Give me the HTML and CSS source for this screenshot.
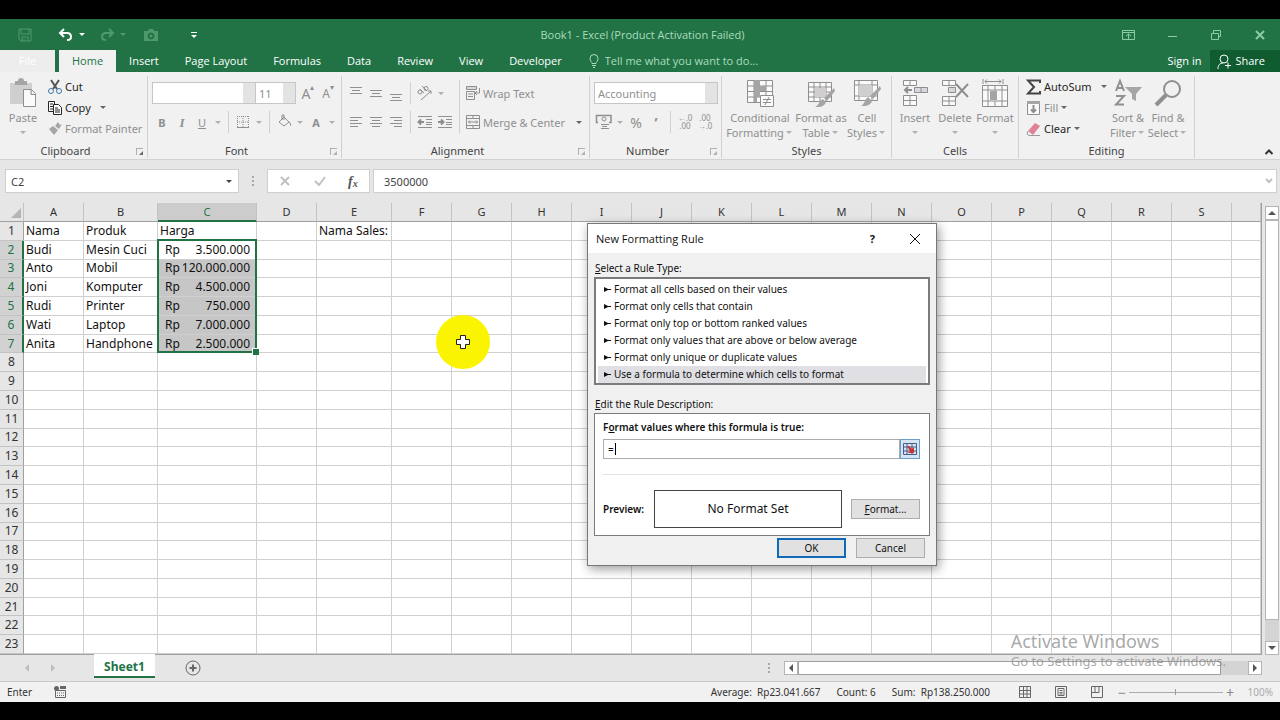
FILE: index.html
```html
<!DOCTYPE html>
<html lang="en">
<head>
    <meta charset="UTF-8">
    <meta name="viewport" content="width=device-width, initial-scale=1.0">
    <title>Book1 - Excel</title>
    <link rel="stylesheet" href="styles.css">
</head>
<body>
    <header class="titlebar">
        <div class="quick-access">
            <button class="qat dim" aria-label="Save"><svg width="14" height="14" viewBox="0 0 14 14"><path d="M1 1h12v12H3l-2-2zM3 1v5h8V1M4 13V9h6v4M6 11v2"/></svg></button>
            <button class="qat undo" aria-label="Undo"><svg width="16" height="14" viewBox="0 0 16 14"><path class="thick" d="M6 1L2 5l4 4M2 5h7c3 0 4 2 4 4s-1 3-4 3"/></svg></button>
            <span class="caret light"></span>
            <button class="qat dim redo" aria-label="Redo"><svg width="16" height="14" viewBox="0 0 16 14"><path class="thick" d="M10 1l4 4-4 4M14 5H7C4 5 3 7 3 9s1 3 4 3"/></svg></button>
            <span class="caret dimmed"></span>
            <button class="qat dim camera" aria-label="Camera"><svg width="16" height="14" viewBox="0 0 16 14"><path class="solid" fill-rule="evenodd" d="M1 3h4l1-2h4l1 2h4v10H1zM8 4.500a3.500 3.500 0 1 0 .01 0zM8 6.500a1.500 1.500 0 1 1-.01 0z"/></svg></button>
            <button class="qat customize" aria-label="Customize toolbar"><svg width="8" height="8" viewBox="0 0 8 8"><path d="M1 1.500h6"/><path class="solid" d="M1 4h6L4 7z"/></svg></button>
        </div>
        <div class="title">Book1 - Excel (Product Activation Failed)</div>
        <div class="window-buttons">
            <button aria-label="Ribbon options"><svg width="13" height="12" viewBox="0 0 13 12"><path d="M.5 1.500h12v9H.5zM.5 3.500h12M6.500 10V5M4 7l2.500-2L9 7"/></svg></button>
            <button aria-label="Minimize"><svg width="12" height="12" viewBox="0 0 12 12"><path d="M2 7.500h9"/></svg></button>
            <button aria-label="Restore"><svg width="12" height="12" viewBox="0 0 12 12"><path d="M1.500 4.500h7v6h-7zM3.500 4V1.500h7v6H9"/></svg></button>
            <button aria-label="Close"><svg width="12" height="12" viewBox="0 0 12 12"><path class="thick" d="M2 2l8 8M10 2l-8 8"/></svg></button>
        </div>
    </header>

    <nav class="tabs">
        <a href="#" class="tab file">File</a>
        <a href="#" class="tab active">Home</a>
        <a href="#" class="tab">Insert</a>
        <a href="#" class="tab">Page Layout</a>
        <a href="#" class="tab">Formulas</a>
        <a href="#" class="tab">Data</a>
        <a href="#" class="tab">Review</a>
        <a href="#" class="tab">View</a>
        <a href="#" class="tab">Developer</a>
        <label class="tell-me">
            <svg width="10" height="14" viewBox="0 0 10 14"><path d="M3 9.500C3 8 1 7 1 4.500a4 4 0 0 1 8 0C9 7 7 8 7 9.500zM3 11.500h4M4 13.500h2"/></svg>
            <input type="text" placeholder="Tell me what you want to do..." aria-label="Tell me what you want to do">
        </label>
        <a href="#" class="sign-in">Sign in</a>
        <a href="#" class="share"><svg width="15" height="15" viewBox="0 0 15 15"><circle cx="7" cy="5" r="4"/><path d="M1 15c0-4 2-6 5-6M8 11.500h6M11 8.500v6"/></svg>Share</a>
    </nav>

    <section class="ribbon">
        <div class="group clipboard">
            <div class="group-body">
                <button class="big paste off">
                    <svg width="28" height="30" viewBox="0 0 28 30"><path class="mid" d="M1 5h22v21H1z"/><path class="dark" d="M6 3h3a3 3 0 0 1 6 0h3v4H6z"/><path class="paper" d="M14.500 11.500h8l4 4v13h-12zM22 11.500v5h4.500"/></svg>
                    <span>Paste</span><span class="caret"></span>
                </button>
                <div class="stack">
                    <button class="small"><svg width="16" height="16" viewBox="0 0 16 16"><path d="M4 1l6 9M12 1L6 10" stroke="#555" stroke-width="2"/><g class="blue"><circle cx="4" cy="12" r="2.500"/><circle cx="12" cy="12" r="2.500"/></g></svg>Cut</button>
                    <button class="small"><svg width="16" height="16" viewBox="0 0 16 16" stroke="#5a6470"><path class="paper" d="M1.500 1.500h6v10h-6zM3 4h3M3 6.500h3M3 9h3"/><path class="paper" d="M6.500 4.500h5l3 3v7h-8zM8 8h3M8 10h5M8 12h5"/></svg>Copy<span class="caret"></span></button>
                    <button class="small off"><svg width="16" height="16" viewBox="0 0 16 16"><path class="dark" d="M2 8l4-3 5 4-4 5zM8 5l3-4 2 3 2-1-3 5z"/></svg>Format Painter</button>
                </div>
            </div>
            <div class="group-label">Clipboard<i class="launcher on"></i></div>
        </div>

        <div class="group font">
            <div class="group-body rows">
                <div class="row">
                    <select class="combo name" aria-label="Font" disabled><option></option></select>
                    <select class="combo size" aria-label="Font size" disabled><option>11</option></select>
                    <button class="tool grow">A<sup>▴</sup></button>
                    <button class="tool grow less">A<sup>▾</sup></button>
                </div>
                <div class="row">
                    <button class="tool"><b>B</b></button>
                    <button class="tool italic">I</button>
                    <button class="tool"><u>U</u></button><span class="caret"></span>
                    <i class="sep"></i>
                    <button class="tool" aria-label="Borders"><svg width="14" height="14" viewBox="0 0 14 14"><path stroke-dasharray="1 1" d="M1 1.500h12M1.500 1v12M12.500 1v12M7 1v12M1 7h12"/><path d="M1 12.500h12"/></svg></button><span class="caret"></span>
                    <i class="sep"></i>
                    <button class="tool" aria-label="Fill color"><svg width="16" height="16" viewBox="0 0 16 16"><path d="M3 8l5-5 5 5-5 4zM6 6V1h2v5M13 8c2 1 2 4 1 4"/></svg></button><span class="caret"></span>
                    <button class="tool"><b>A</b></button><span class="caret"></span>
                </div>
            </div>
            <div class="group-label">Font<i class="launcher"></i></div>
        </div>

        <div class="group alignment">
            <div class="group-body">
                <div class="rows">
                    <div class="row">
                        <button class="tool" aria-label="Top align"><svg width="14" height="18" viewBox="0 0 14 18"><path d="M1 3.500h12M3 6.500h8M1 9.500h12"/></svg></button>
                        <button class="tool" aria-label="Middle align"><svg width="14" height="18" viewBox="0 0 14 18"><path d="M1 6.500h12M3 9.500h8M1 12.500h12"/></svg></button>
                        <button class="tool" aria-label="Bottom align"><svg width="14" height="18" viewBox="0 0 14 18"><path d="M1 10.500h12M3 13.500h8M1 16.500h12"/></svg></button>
                        <i class="sep"></i>
                        <button class="tool" aria-label="Orientation"><svg width="18" height="16" viewBox="0 0 18 16"><path d="M5 15L15 6M12 6h3v3"/><circle cx="4" cy="7" r="2"/><path d="M4 4l4 4M6 1l5 5"/><circle cx="10" cy="3.500" r="2"/></svg></button><span class="caret"></span>
                    </div>
                    <div class="row">
                        <button class="tool" aria-label="Align left"><svg width="14" height="14" viewBox="0 0 14 14"><path d="M1 2.500h12M1 5.500h8M1 8.500h12M1 11.500h8"/></svg></button>
                        <button class="tool" aria-label="Center"><svg width="14" height="14" viewBox="0 0 14 14"><path d="M1 2.500h12M3 5.500h8M1 8.500h12M3 11.500h8"/></svg></button>
                        <button class="tool" aria-label="Align right"><svg width="14" height="14" viewBox="0 0 14 14"><path d="M1 2.500h12M5 5.500h8M1 8.500h12M5 11.500h8"/></svg></button>
                        <i class="sep"></i>
                        <button class="tool" aria-label="Decrease indent"><svg width="16" height="14" viewBox="0 0 16 14"><path d="M1 1.500h14M9 4.500h6M9 7.500h6M9 9.500h6M1 12.500h14"/><path class="heavy" d="M7 7H2M4 4.500L1.500 7 4 9.500"/></svg></button>
                        <button class="tool" aria-label="Increase indent"><svg width="16" height="14" viewBox="0 0 16 14"><path d="M1 1.500h14M9 4.500h6M9 7.500h6M9 9.500h6M1 12.500h14"/><path class="heavy" d="M1 7h5M4 4.500L6.500 7 4 9.500"/></svg></button>
                    </div>
                </div>
                <i class="sep tall"></i>
                <div class="rows">
                    <div class="row"><button class="small off"><svg width="16" height="16" viewBox="0 0 16 16"><path class="fillgray" d="M1.500 1.500h10v3h-10z"/><path d="M1.500 6.500h8v8h-8zM3 9h5M3 11.500h5M14.500 3v5H10M12 6l-2 2 2 2"/></svg>Wrap Text</button></div>
                    <div class="row"><button class="small off merge"><svg width="16" height="16" viewBox="0 0 16 16"><path d="M1.500 1.500h13v13h-13zM1.500 4.500h13M1.500 11.500h13M8 1.500v3M8 11.500v3M3 8h10M5 6.500L3.500 8 5 9.500M11 6.500L12.500 8 11 9.500"/></svg>Merge &amp; Center<span class="caret"></span></button></div>
                </div>
            </div>
            <div class="group-label">Alignment<i class="launcher"></i></div>
        </div>

        <div class="group number">
            <div class="group-body rows">
                <div class="row"><select class="combo format" aria-label="Number format" disabled><option>Accounting</option></select></div>
                <div class="row">
                    <button class="tool" aria-label="Accounting format"><svg width="18" height="16" viewBox="0 0 18 16"><path d="M3 8.500H1.500v-7H16v7h-2" stroke-width="1.500"/><circle cx="9" cy="5" r="2"/><path d="M6 10.500h8M7 12.500h5M6 14.500h8"/></svg></button><span class="caret"></span>
                    <button class="tool percent">%</button>
                    <button class="tool comma" aria-label="Comma style">’</button>
                    <i class="sep"></i>
                    <button class="tool digits"><span>←.0</span><span>.00</span></button>
                    <button class="tool digits"><span>.00</span><span>→.0</span></button>
                </div>
            </div>
            <div class="group-label">Number<i class="launcher"></i></div>
        </div>

        <div class="group styles">
            <div class="group-body">
                <button class="big off wide">
                    <svg width="28" height="30" viewBox="0 0 28 30"><path class="paper" d="M1.500 2.500h25v22h-25zM1.500 8h25M1.500 13.500h25M1.500 19h25M8 2.500v22M20 2.500v22"/><path class="dark" d="M8 2h6v6h6v5h-6v6h-3v5H8z"/><path class="paper" d="M14.500 17.500h13v11h-13zM17 21.500h8M17 24.500h8M23 19l-4 8"/></svg>
                    <span>Conditional</span><span>Formatting <span class="caret"></span></span>
                </button>
                <button class="big off medium">
                    <svg width="28" height="30" viewBox="0 0 28 30"><path class="paper" d="M1.500 4.500h23v19h-23zM1.500 9h23M1.500 14h23M1.500 19h23M7 4.500v19M13 4.500v19M19 4.500v19"/><path class="mid" d="M8 10h11v9H8z"/><path class="dark" d="M27 10l1 3-8 10-3-3zM16 21l3 3c-2 5-6 5-11 5 4-2 4-6 8-8z"/></svg>
                    <span>Format as</span><span>Table <span class="caret"></span></span>
                </button>
                <button class="big off">
                    <svg width="28" height="30" viewBox="0 0 28 30"><path class="paper" d="M1.500 2.500h23v20h-23zM1.500 7h23M1.500 18h23M6 2.500v20M19 2.500v20"/><path class="mid" d="M6 7h13v11H6z"/><path class="dark" d="M27 8l1 3-8 10-3-3zM15 19l4 4c-2 5-6 5-11 5 4-2 3-6 7-9z"/></svg>
                    <span>Cell</span><span>Styles <span class="caret"></span></span>
                </button>
            </div>
            <div class="group-label">Styles</div>
        </div>

        <div class="group cells">
            <div class="group-body">
                <button class="big off">
                    <svg width="28" height="30" viewBox="0 0 28 30"><path class="paper" d="M2.500 2.500h13v5h-13zM9 2.500v5M2.500 17.500h13v10h-13zM9 17.500v10M2.500 22.500h13"/><path class="fillgray" d="M13.500 9.500h13v5h-13zM20 9.500v5"/><path class="heavy" d="M11 12H4M7 9l-3 3 3 3"/></svg>
                    <span>Insert</span><span class="caret"></span>
                </button>
                <button class="big off">
                    <svg width="28" height="30" viewBox="0 0 28 30"><path class="paper" d="M1.500 2.500h13v5h-13zM8 2.500v5M1.500 18.500h13v9h-13zM8 18.500v9M1.500 23h13"/><path class="fillgray" d="M7.500 9.500h7v5h-7z"/><path class="heavy" d="M15 6l12 13M27 6L15 19"/></svg>
                    <span>Delete</span><span class="caret"></span>
                </button>
                <button class="big off">
                    <svg width="28" height="30" viewBox="0 0 28 30"><path class="paper" d="M1.500 7.500h25v21h-25zM1.500 12h25M1.500 23h25M7 7.500v21M14 7.500v5M14 23v5M21 7.500v21"/><path class="dark" d="M9 13h7v9H9z"/><path d="M2 1v5M22 1v5M4 3.500h16M6 1.500l-2 2 2 2M18 1.500l2 2-2 2"/></svg>
                    <span>Format</span><span class="caret"></span>
                </button>
            </div>
            <div class="group-label">Cells</div>
        </div>

        <div class="group editing">
            <div class="group-body">
                <div class="stack">
                    <button class="small"><svg width="16" height="16" viewBox="0 0 16 16"><path d="M14 4V1.500H2L8 8l-6 6.500h12V12" stroke="#444" stroke-width="2"/></svg>AutoSum<span class="caret"></span></button>
                    <button class="small off"><svg width="16" height="16" viewBox="0 0 16 16"><path class="paper" d="M1.500 1.500h12v13h-12z"/><path class="dark" d="M1 1h13v3H1z"/><path class="heavy" d="M7.500 5v7M5 9.500L7.500 12 10 9.500"/></svg>Fill<span class="caret near"></span></button>
                    <button class="small"><svg width="16" height="16" viewBox="0 0 16 16"><path class="pink" d="M2 10L9 2l5 3-7 9z"/><path class="gray" d="M2 10l-1 3 2 1.500h11"/></svg>Clear<span class="caret near"></span></button>
                </div>
                <button class="big off">
                    <svg class="sort" width="28" height="30" viewBox="0 0 28 30"><path class="thick" d="M2 13L6 3l4 10M3.500 10h5M2 18h8L2 26.500h8"/><path class="dark" d="M11 9h17l-6 7v7l-4-2v-5z"/></svg>
                    <span>Sort &amp;</span><span>Filter <span class="caret"></span></span>
                </button>
                <button class="big off">
                    <svg width="28" height="30" viewBox="0 0 28 30"><circle class="thick" cx="18" cy="11" r="8"/><path d="M12 17L2 27" stroke-width="4"/></svg>
                    <span>Find &amp;</span><span>Select <span class="caret"></span></span>
                </button>
            </div>
            <div class="group-label">Editing</div>
        </div>
        <button class="collapse" aria-label="Collapse the ribbon"><svg width="10" height="8" viewBox="0 0 10 8"><path d="M1.500 6L5 2.500 8.500 6" stroke-width="2"/></svg></button>
    </section>

    <section class="formula-bar">
        <div class="name-box"><input type="text" value="C2" aria-label="Name box"><span class="caret"></span></div>
        <i class="dots"></i>
        <div class="formula-buttons">
            <button aria-label="Cancel entry"><svg width="12" height="12" viewBox="0 0 12 12"><path d="M2 2l8 8M10 2l-8 8" stroke-width="2"/></svg></button>
            <button aria-label="Enter entry"><svg width="12" height="12" viewBox="0 0 12 12"><path d="M1 6l4 4 6-8" stroke-width="2"/></svg></button>
            <button class="fx">f<small>x</small></button>
        </div>
        <div class="formula-input">
            <input type="text" value="3500000" aria-label="Formula">
            <svg width="8" height="8" viewBox="0 0 8 8"><path d="M1 2l3 3 3-3" stroke-width="2"/></svg>
        </div>
    </section>

    <main class="workspace">
        <div class="sheet"><table class="grid" id="grid"></table></div>
        <div class="v-scroll">
            <button class="arrow up" aria-label="Scroll up"></button>
            <div class="track"><div class="thumb"></div></div>
            <button class="arrow down" aria-label="Scroll down"></button>
        </div>
    </main>

    <section class="sheet-bar">
        <button class="arrow left faded" aria-label="Previous sheet"></button>
        <button class="arrow right faded" aria-label="Next sheet"></button>
        <a href="#" class="sheet-tab">Sheet1</a>
        <button class="add-sheet" aria-label="New sheet"><svg width="16" height="16" viewBox="0 0 16 16"><circle cx="8" cy="8" r="7"/><path d="M4.500 8h7M8 4.500v7" stroke-width="2"/></svg></button>
        <i class="dots"></i>
        <div class="h-scroll">
            <button class="arrow left" aria-label="Scroll left"></button>
            <div class="track"><div class="thumb"></div></div>
            <button class="arrow right" aria-label="Scroll right"></button>
        </div>
    </section>

    <footer class="status">
        <span>Enter</span>
        <svg class="macro" width="14" height="14" viewBox="0 0 14 14"><path d="M2.500 5.500h10v7h-10zM4 8h1M6 8h1M8 8h1M10 8h1M4 10.500h1M6 10.500h1M8 10.500h1M10 10.500h1"/><path class="solid" d="M7 1h6v3H7zM3.500 1a2.500 2.500 0 1 0 .01 0z"/></svg>
        <div class="totals"><span>Average:&nbsp; Rp23.041.667</span><span>Count: 6</span><span>Sum:&nbsp; Rp138.250.000</span></div>
        <div class="views">
            <button aria-label="Normal"><svg width="14" height="14" viewBox="0 0 14 14"><path d="M1.500 1.500h11v11h-11zM1.500 5.500h11M1.500 9h11M5.500 1.500v11M9 1.500v11"/></svg></button>
            <button aria-label="Page layout"><svg width="14" height="14" viewBox="0 0 14 14"><path d="M1.500 1.500h11v11h-11zM4 3.500h6v7H4zM5.500 5.500h3M5.500 7.500h3M5.500 9h3"/></svg></button>
            <button aria-label="Page break preview"><svg width="14" height="14" viewBox="0 0 14 14"><path d="M1.500 1.500h11v11h-11zM5 1.500v6h4v-6M1.500 7.500H5"/></svg></button>
        </div>
        <div class="zoom">
            <span>−</span><input type="range" min="0" max="100" value="50" aria-label="Zoom"><span>+</span>
            <span class="level">100%</span>
        </div>
    </footer>

    <div class="pointer"><svg width="16" height="16" viewBox="0 0 16 16"><path d="M5.500 1.500h5v4h4v5h-4v4h-5v-4h-4v-5h4z"/></svg></div>

    <form class="dialog" role="dialog" aria-labelledby="dialog-title">
        <div class="dialog-title">
            <span id="dialog-title">New Formatting Rule</span>
            <button type="button" class="help" aria-label="Help">?</button>
            <button type="button" aria-label="Close"><svg width="12" height="12" viewBox="0 0 12 12"><path d="M1 1l10 10M11 1L1 11"/></svg></button>
        </div>
        <div class="dialog-body">
            <div class="caption" id="rule-type"><u>S</u>elect a Rule Type:</div>
            <ul class="rule-list" role="listbox" aria-labelledby="rule-type" id="rules"></ul>
            <div class="caption"><u>E</u>dit the Rule Description:</div>
            <div class="panel">
                <label for="formula">F<u>o</u>rmat values where this formula is true:</label>
                <div class="formula-row">
                    <input type="text" id="formula" value="=">
                    <button type="button" aria-label="Select range"><svg width="14" height="12" viewBox="0 0 14 12"><path d="M.5.500h13v11H.5zM0 4h14M0 8h14M4 0v12M9 0v12"/><path class="red" d="M4 3l2 0 3 3 2-2v6H5l2-2z"/></svg></button>
                </div>
                <div class="preview-row">
                    <b>Preview:</b>
                    <output>No Format Set</output>
                    <button type="button" class="push"><u>F</u>ormat...</button>
                </div>
            </div>
            <div class="actions">
                <button type="button" class="push default">OK</button>
                <button type="button" class="push">Cancel</button>
            </div>
        </div>
    </form>

    <div class="watermark"><p>Activate Windows</p><p class="hint">Go to Settings to activate Windows.</p></div>
    <script src="script.js"></script>
</body>
</html>
```
FILE: styles.css
```css
:root {
    --green: #217346;
    --dark-green: #0e5c2f;
    --ribbon: #f1f1f1;
    --chrome: #e6e6e6;
    --line: #d0d0d0;
    --off: #8f8f8f;
    --text: #333333;
}
* {
    box-sizing: border-box;
}
body {
    margin: 0;
    padding: 19px 0 18px;
    height: 100vh;
    display: flex;
    flex-direction: column;
    overflow: hidden;
    position: relative;
    background-color: #000000;
    color: var(--text);
    font-family: "Noto Sans", "Open Sans", sans-serif;
    font-size: 11px;
    line-height: 15px;
}
button, input, select {
    font: inherit;
    color: inherit;
    margin: 0;
    padding: 0;
    border: none;
    background: none;
}
button {
    display: inline-flex;
    align-items: center;
    justify-content: center;
}
input {
    outline: none;
    min-width: 0;
}
a {
    color: inherit;
    text-decoration: none;
}
svg {
    display: block;
    flex: none;
    fill: none;
    stroke: currentColor;
    stroke-width: 1;
}
svg .thick {
    stroke-width: 2;
}
svg .heavy {
    stroke-width: 2;
}
svg .solid {
    fill: currentColor;
    stroke: none;
}
svg .mid {
    fill: #d0cece;
    stroke: none;
}
svg .dark {
    fill: #a5a5a5;
    stroke: none;
}
svg .paper {
    fill: #fafafa;
}
svg .fillgray {
    fill: #d8d8dc;
}
svg .blue {
    stroke: #3f78a8;
}
svg .pink {
    fill: #e08198;
    stroke: none;
}
svg .gray {
    stroke: #999999;
}
svg .red {
    fill: #d03030;
    stroke: none;
}
.caret {
    display: inline-flex;
    justify-content: center;
    width: 12px;
    flex: none;
}
.caret::before {
    content: "";
    border: 3px solid transparent;
    border-top-color: currentColor;
    border-bottom: none;
}
.off .caret, .row .caret {
    color: #b0b0b0;
}
.small .caret {
    color: #666666;
}

/* Title bar */
.titlebar {
    display: flex;
    align-items: center;
    height: 31px;
    flex: none;
    background-color: var(--green);
    color: #a9dcbc;
}
.titlebar, .tabs {
    font-family: "Open Sans", "Noto Sans", sans-serif;
}
.quick-access, .window-buttons {
    flex: 1;
    display: flex;
    align-items: center;
}
.quick-access {
    padding-left: 15px;
    color: #ffffff;
}
.qat {
    width: 20px;
}
.qat.dim, .caret.dimmed {
    color: #4f9a6d;
}
.undo {
    margin-left: 21px;
}
.redo {
    margin-left: 9px;
}
.camera {
    margin-left: 12px;
}
.customize {
    margin-left: 23px;
}
.window-buttons {
    justify-content: flex-end;
    gap: 24px;
    padding-right: 10px;
    color: #8ecba5;
}
.window-buttons button {
    width: 20px;
}

/* Ribbon tabs */
.tabs {
    display: flex;
    height: 22px;
    flex: none;
    background-color: var(--green);
    color: #ffffff;
    line-height: 22px;
}
.tab {
    padding: 0 13px;
}
.tab.file {
    width: 55px;
    margin-right: 4px;
    text-align: center;
    background-color: #ededed;
}
.tab.active {
    background-color: var(--ribbon);
    color: var(--green);
}
.tell-me {
    flex: 1;
    display: flex;
    align-items: center;
    gap: 6px;
    padding-left: 14px;
    color: #a9dcbc;
}
.tell-me input {
    flex: 1;
}
.tell-me input::placeholder {
    color: #a9dcbc;
}
.sign-in {
    padding-right: 9px;
}
.share {
    display: flex;
    align-items: center;
    gap: 3px;
    padding: 0 15px 0 7px;
    background-color: var(--dark-green);
}

/* Ribbon */
.ribbon {
    display: flex;
    height: 88px;
    flex: none;
    background-color: var(--ribbon);
    border-bottom: 1px solid #d2d2d2;
    position: relative;
}
.group {
    display: flex;
    flex-direction: column;
    margin: 4px 0 1px;
    border-right: 1px solid var(--line);
}
.clipboard {
    width: 148px;
}
.font {
    width: 194px;
}
.alignment {
    width: 248px;
}
.number {
    width: 132px;
}
.styles {
    width: 170px;
}
.cells {
    width: 127px;
}
.editing {
    width: 176px;
}
.group-body {
    height: 67px;
    flex: none;
    display: flex;
    padding: 0 3px;
}
.group-label {
    position: relative;
    padding-right: 16px;
    text-align: center;
    color: #444444;
}
.styles .group-label, .cells .group-label, .editing .group-label {
    padding-right: 0;
}
.launcher {
    position: absolute;
    right: 4px;
    top: 5px;
    width: 7px;
    height: 7px;
    border-top: 1px solid #b0b0b0;
    border-left: 1px solid #b0b0b0;
}
.launcher::after {
    content: "";
    position: absolute;
    right: 0;
    bottom: 0;
    border: 2px solid #b0b0b0;
    border-top-color: transparent;
    border-left-color: transparent;
}
.launcher.on, .launcher.on::after {
    border-right-color: #666666;
    border-bottom-color: #666666;
}
.big {
    flex-direction: column;
    justify-content: flex-start;
    width: 40px;
    padding-top: 2px;
    white-space: nowrap;
}
.big svg {
    margin-bottom: 2px;
}
.big span {
    display: inline-flex;
    align-items: center;
}
.big .caret {
    width: 10px;
}
.big > .caret {
    height: 14px;
}
.wide {
    width: 70px;
}
.medium {
    width: 52px;
}
.off {
    color: var(--off);
}
.stack {
    display: flex;
    flex-direction: column;
    padding-left: 4px;
}
.small {
    height: 22px;
    gap: 2px;
    justify-content: flex-start;
    white-space: nowrap;
    color: #262626;
}
.small.off {
    color: var(--off);
}
.small .caret {
    margin-left: 4px;
}
.small .near {
    margin-left: -2px;
}
.stack .small {
    height: 21px;
}
.editing .stack {
    width: 86px;
}
.rows {
    flex-direction: column;
    display: flex;
    padding-top: 6px;
    gap: 7px;
}
.row {
    display: flex;
    align-items: center;
    height: 22px;
    color: var(--off);
}
.font .rows, .number .rows {
    padding-left: 4px;
}
.alignment .rows {
    padding-left: 1px;
}
.tool {
    width: 20px;
    height: 20px;
}
.sep {
    width: 1px;
    height: 22px;
    margin: 0 4px;
    background-color: var(--line);
}
.sep.tall {
    height: 54px;
    margin: 4px 4px 0;
}
.merge .caret {
    margin-left: 6px;
}
.combo {
    appearance: none;
    height: 22px;
    padding-left: 3px;
    border: 1px solid #c6c6c6;
    color: var(--off);
    opacity: 1;
    background: linear-gradient(to left, #e3e3e3 12px, #ffffff 12px);
}
.combo.name {
    width: 104px;
}
.combo.size {
    width: 40px;
    margin-right: 2px;
    border-left: none;
}
.combo.format {
    width: 124px;
}
.grow {
    font-size: 14px;
}
.grow.less {
    font-size: 12px;
}
.grow sup {
    align-self: flex-start;
    font-size: 8px;
    line-height: 8px;
}
.italic {
    font-family: "Liberation Serif", serif;
    font-style: italic;
    font-weight: bold;
    font-size: 13px;
}
.percent, .comma {
    font-size: 14px;
}
.comma {
    font-weight: bold;
}
.digits {
    flex-direction: column;
    font-size: 8px;
    line-height: 8px;
}
.collapse {
    position: absolute;
    right: 6px;
    bottom: 3px;
}

/* Formula bar */
.formula-bar {
    display: flex;
    height: 43px;
    flex: none;
    padding: 9px 3px 10px 5px;
    background-color: var(--chrome);
}
.name-box, .formula-buttons, .formula-input {
    display: flex;
    align-items: center;
    background-color: #ffffff;
    border: 1px solid #cfcfcf;
}
.name-box {
    width: 234px;
    padding: 0 3px 0 5px;
    color: #444444;
}
.name-box input, .formula-input input {
    flex: 1;
}
.dots {
    width: 2px;
    height: 11px;
    margin: auto 13px;
    background: repeating-linear-gradient(#a8a8a8 0 2px, transparent 2px 4px);
}
.formula-buttons {
    width: 103px;
    justify-content: space-around;
    color: #c0c0c0;
}
.formula-buttons .fx {
    color: #555555;
    font-family: "Liberation Serif", serif;
    font-style: italic;
    font-weight: bold;
    font-size: 14px;
}
.fx small {
    font-size: 10px;
    padding-top: 4px;
}
.formula-input {
    flex: 1;
    margin-left: 3px;
    padding: 0 3px 0 10px;
    color: #444444;
}
.formula-input svg {
    color: #c0c0c0;
}

/* Sheet */
.workspace {
    flex: 1;
    display: flex;
    min-height: 0;
    background-color: var(--chrome);
}
.sheet {
    flex: 1;
    border-right: 1px solid #a0a0a0;
    border-bottom: 1px solid #a0a0a0;
}
.grid {
    width: 100%;
    height: 100%;
    table-layout: fixed;
    border-collapse: separate;
    border-spacing: 0;
    font-size: 12px;
    line-height: 16px;
    color: #111111;
    white-space: nowrap;
}
.grid th {
    padding: 0;
    font-weight: normal;
    font-size: 11px;
    color: #333333;
    background-color: var(--chrome);
    border-right: 1px solid #c3c3c3;
    border-bottom: 1px solid #c3c3c3;
}
.grid thead th {
    height: 19px;
    border-bottom-color: #a0a0a0;
}
.grid tbody th {
    font-size: 12px;
    border-right-color: #a0a0a0;
}
.grid thead th.picked {
    background-color: #cccccc;
    color: var(--green);
    border-bottom: 2px solid var(--green);
}
.grid tbody th.picked {
    background-color: #d2d2d2;
    color: var(--green);
    border-right: 2px solid var(--green);
}
.grid td {
    padding: 0 2px;
    background-color: #ffffff;
    border-right: 1px solid #d0d0d0;
    border-bottom: 1px solid #d0d0d0;
    position: relative;
}
.grid td.shaded {
    background-color: #c6c6c6;
}
.corner::after {
    content: "";
    display: block;
    width: 0;
    margin: 2px 2px 0 auto;
    border: 5px solid #b5b5b5;
    border-top-color: transparent;
    border-left-color: transparent;
}
.money {
    display: flex;
    justify-content: space-between;
    padding: 0 4px 0 5px;
}
.selection {
    position: absolute;
    top: -2px;
    left: -1px;
    width: calc(100% + 2px);
    height: calc(600% + 8px);
    border: 2px solid var(--green);
    z-index: 1;
}
.selection::after {
    content: "";
    position: absolute;
    right: -4px;
    bottom: -4px;
    width: 6px;
    height: 6px;
    background-color: var(--green);
    border: 1px solid #ffffff;
    border-right: none;
    border-bottom: none;
}

/* Scrollbars */
.arrow {
    width: 14px;
    height: 14px;
    background-color: #ffffff;
    border: 1px solid #b5b5b5;
    color: #555555;
}
.arrow::before {
    content: "";
    border: 4px solid transparent;
}
.arrow.up::before {
    border-bottom-color: currentColor;
    border-top: none;
}
.arrow.down::before {
    border-top-color: currentColor;
    border-bottom: none;
}
.arrow.left::before {
    border-right-color: currentColor;
    border-left: none;
}
.arrow.right::before {
    border-left-color: currentColor;
    border-right: none;
}
.arrow.faded {
    background: none;
    border: none;
    color: #bdbdbd;
}
.v-scroll {
    display: flex;
    flex-direction: column;
    width: 18px;
    padding: 3px 1px 0 3px;
}
.v-scroll .track, .h-scroll .track {
    flex: 1;
    background-color: #d4d4d4;
}
.v-scroll .thumb {
    height: 95%;
    background-color: #ffffff;
    border: 1px solid #b5b5b5;
}
.h-scroll {
    display: flex;
    width: 478px;
    margin-right: 18px;
}
.h-scroll .thumb {
    width: 94%;
    height: 14px;
    background-color: #ffffff;
    border: 1px solid #a0a0a0;
}

/* Sheet tabs */
.sheet-bar {
    display: flex;
    align-items: center;
    height: 26px;
    flex: none;
    padding-left: 20px;
    background-color: var(--chrome);
}
.sheet-bar .faded {
    margin-right: 12px;
}
.sheet-tab {
    align-self: flex-start;
    width: 61px;
    height: 24px;
    margin: -1px 30px 0 22px;
    background-color: #ffffff;
    border-bottom: 2px solid var(--green);
    color: var(--green);
    font-weight: bold;
    font-size: 12px;
    line-height: 26px;
    text-align: center;
}
.add-sheet {
    color: #666666;
}
.sheet-bar .dots {
    margin: 0 14px 0 auto;
}

/* Status bar */
.status {
    display: flex;
    align-items: center;
    height: 21px;
    flex: none;
    padding: 0 7px;
    background-color: #f1f1f1;
    border-top: 1px solid #c8c8c8;
    font-size: 10px;
}
.macro {
    margin-left: 21px;
}
.macro, .views {
    color: #666666;
}
.totals {
    flex: 1;
    display: flex;
    justify-content: flex-end;
    gap: 16px;
}
.views {
    display: flex;
    gap: 22px;
    padding: 0 14px 0 28px;
}
.zoom {
    display: flex;
    align-items: center;
    color: #888888;
}
.zoom span {
    font-size: 14px;
}
.zoom .level {
    width: 39px;
    text-align: right;
    font-size: 10px;
    color: #aaaaaa;
}
.zoom input {
    appearance: none;
    width: 94px;
    height: 10px;
    margin: 0 3px;
    background: linear-gradient(#aaaaaa, #aaaaaa) center / 100% 1px no-repeat;
}
.zoom input::-webkit-slider-thumb {
    appearance: none;
    width: 1px;
    height: 6px;
    background-color: #999999;
}

/* Mouse highlight */
.pointer {
    position: absolute;
    left: 436px;
    top: 315px;
    display: flex;
    align-items: center;
    justify-content: center;
    width: 54px;
    height: 54px;
    border-radius: 50%;
    background-color: #fbf400;
    color: #222222;
}
.pointer path {
    fill: #ffffff;
}

/* Dialog */
.dialog {
    position: absolute;
    left: 587px;
    top: 223px;
    width: 350px;
    background-color: #f0f0f0;
    border: 1px solid #777777;
    box-shadow: 2px 3px 10px rgba(0,0,0,0.4);
    color: #111111;
    font-size: 10px;
}
.dialog-title {
    display: flex;
    align-items: center;
    height: 29px;
    padding: 0 15px 0 8px;
    background-color: #ffffff;
    font-family: "Open Sans", "Noto Sans", sans-serif;
    font-size: 11px;
}
.dialog-title span {
    flex: 1;
}
.help {
    margin-right: 34px;
    font-weight: bold;
}
.dialog-body {
    padding: 8px 6px 7px;
}
.caption {
    padding-left: 1px;
    height: 16px;
}
.rule-list {
    list-style: none;
    margin: 0 0 12px;
    padding: 2px 2px 0;
    border: 2px solid #7b7b7b;
    background-color: #ffffff;
}
.rule-list li {
    display: flex;
    align-items: center;
    gap: 2px;
    height: 17px;
    padding-left: 5px;
}
.rule-list li.chosen {
    background-color: #dfdfe4;
}
.panel {
    padding: 6px 9px 7px 8px;
    background-color: #ffffff;
    border: 1px solid #7b7b7b;
}
.panel label, .panel b {
    display: block;
    font-weight: 600;
}
.formula-row {
    display: flex;
    height: 20px;
    margin: 4px 0 15px;
}
.formula-row input {
    flex: 1;
    padding: 0 4px;
    border: 1px solid #ababab;
    caret-color: transparent;
}
.formula-row input:focus {
    background: linear-gradient(#000000, #000000) 11px center / 1px 12px no-repeat;
}
.formula-row button {
    width: 20px;
    background-color: #d6e5f4;
    border: 1px solid #6c9fce;
    color: #4a5c8a;
}
.preview-row {
    display: flex;
    align-items: center;
    gap: 9px;
    padding-top: 15px;
    border-top: 1px solid #e3e3e3;
}
.preview-row b {
    width: 42px;
}
.preview-row output {
    flex: 1;
    height: 38px;
    border: 1px solid #444444;
    font-size: 12px;
    line-height: 36px;
    text-align: center;
}
.push {
    width: 69px;
    height: 20px;
    background-color: #e1e1e1;
    border: 1px solid #adadad;
}
.push.default {
    border: 2px solid #0f6ab5;
}
.actions {
    display: flex;
    justify-content: flex-end;
    gap: 10px;
    padding: 2px 5px 0 0;
}

/* Watermark */
.watermark {
    position: absolute;
    right: 54px;
    bottom: 50px;
    color: rgba(140,140,140,0.75);
}
.watermark p {
    margin: 0;
    font-size: 18px;
    line-height: 22px;
}
.watermark .hint {
    font-size: 13px;
    line-height: 18px;
}
```
FILE: script.js
```js
const widths = [24, 60, 74, 99, 60, 75, 60, 60, 60, 60, 60, 60, 60, 60, 60, 60, 60, 60, 60, 60];
const letters = 'ABCDEFGHIJKLMNOPQRST'.split('');
const data = [
    ['Nama', 'Produk', 'Harga', '', 'Nama Sales:'],
    ['Budi', 'Mesin Cuci', '3.500.000'],
    ['Anto', 'Mobil', '120.000.000'],
    ['Joni', 'Komputer', '4.500.000'],
    ['Rudi', 'Printer', '750.000'],
    ['Wati', 'Laptop', '7.000.000'],
    ['Anita', 'Handphone', '2.500.000']
];
const rules = [
    'Format all cells based on their values',
    'Format only cells that contain',
    'Format only top or bottom ranked values',
    'Format only values that are above or below average',
    'Format only unique or duplicate values',
    'Use a formula to determine which cells to format'
];

function cell(row, col) {
    const value = (data[row - 1] || [])[col] || '';
    if (col === 2 && row > 1 && row < 8) {
        const box = row === 2 ? '<div class="selection"></div>' : '';
        return `<td class="${row > 2 ? 'shaded' : ''}"><div class="money"><span>Rp</span><span>${value}</span></div>${box}</td>`;
    }
    return `<td>${value}</td>`;
}

function buildGrid() {
    let html = '<colgroup>' + widths.map(w => `<col style="width:${w}px">`).join('') + '<col></colgroup>';
    html += '<thead><tr><th class="corner"></th>';
    html += letters.map(l => `<th class="${l === 'C' ? 'picked' : ''}">${l === 'T' ? '' : l}</th>`).join('');
    html += '</tr></thead><tbody>';
    for (let row = 1; row <= 23; row++) {
        html += `<tr><th class="${row > 1 && row < 8 ? 'picked' : ''}">${row}</th>`;
        html += letters.map((l, col) => cell(row, col)).join('') + '</tr>';
    }
    html += '</tbody>';
    document.getElementById('grid').innerHTML = html;
}

function buildRules() {
    const icon = '<svg width="9" height="7" viewBox="0 0 9 7"><path class="solid" d="M1 1v5l4-2h3v-1H5z"/></svg>';
    document.getElementById('rules').innerHTML = rules.map((text, i) =>
        `<li role="option" class="${i === 5 ? 'chosen' : ''}">${icon}${text}</li>`).join('');
}

buildGrid();
buildRules();
const formula = document.getElementById('formula');
formula.focus();
formula.setSelectionRange(1, 1);
```
